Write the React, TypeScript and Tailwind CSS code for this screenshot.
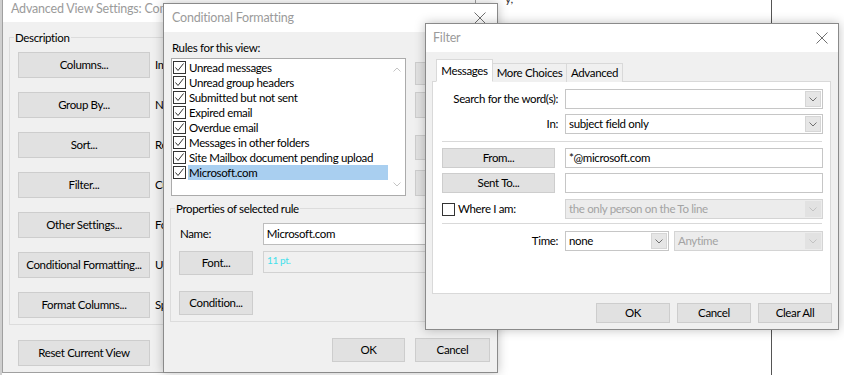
import React from 'react';

type BtnProps = { children?: React.ReactNode; className?: string };

const Btn = ({ children, className = '' }: BtnProps) => (
  <button
    type="button"
    className={`flex shrink-0 items-center justify-center whitespace-nowrap border border-[#cdcdcd] bg-[#e1e1e1] leading-none text-black ${className}`}
  >
    {children}
  </button>
);

const Chevron = ({ color = '#6d6d6d', up = false }: { color?: string; up?: boolean }) => (
  <svg width="8" height="5" viewBox="0 0 8 5" className={up ? 'rotate-180' : ''}>
    <path d="M0.5 0.5 L4 4 L7.5 0.5" fill="none" stroke={color} strokeWidth="1" />
  </svg>
);

const CloseX = () => (
  <svg width="12" height="12" viewBox="0 0 12 12">
    <path d="M0.5 0.5 L11.5 11.5 M11.5 0.5 L0.5 11.5" stroke="#707070" strokeWidth="1" fill="none" />
  </svg>
);

const Check = ({ checked = false }: { checked?: boolean }) => (
  <span className="flex h-[13px] w-[13px] shrink-0 items-center justify-center border border-[#333333] bg-white">
    {checked && (
      <svg width="11" height="11" viewBox="0 0 11 11">
        <path d="M1.5 5.5 L4 8.5 L9.5 1.5" fill="none" stroke="#333333" strokeWidth="1" />
      </svg>
    )}
  </span>
);

const Combo = ({ text = '', disabled = false, className = '' }: { text?: string; disabled?: boolean; className?: string }) => (
  <div
    className={`flex h-[20px] shrink-0 items-stretch border ${
      disabled ? 'border-[#d4d4d4] bg-[#ececec] text-[#a3a3a3]' : 'border-[#c6c6c6] bg-white text-black'
    } ${className}`}
  >
    <span className="flex flex-1 items-center truncate pl-[3px]">{text}</span>
    <span
      className={`m-px flex w-[16px] items-center justify-center ${
        disabled ? 'bg-[#e2e2e2]' : 'border border-[#d6d6d6] bg-[#e6e6e6]'
      }`}
    >
      <Chevron color={disabled ? '#c2c2c2' : '#707070'} />
    </span>
  </div>
);

const TextBox = ({ text = '', className = '' }: { text?: string; className?: string }) => (
  <div className={`flex h-[20px] shrink-0 items-center border border-[#c6c6c6] bg-white pl-[3px] ${className}`}>{text}</div>
);

// description column is cut off by the Conditional Formatting window
const descRows = [
  ['Columns...', 'Importance, Reminder, Icon'],
  ['Group By...', 'None'],
  ['Sort...', 'Received (descending)'],
  ['Filter...', 'Custom'],
  ['Other Settings...', 'Fonts and other settings'],
  ['Conditional Formatting...', 'User defined fonts'],
  ['Format Columns...', 'Specify display formats'],
];

const rules = [
  'Unread messages',
  'Unread group headers',
  'Submitted but not sent',
  'Expired email',
  'Overdue email',
  'Messages in other folders',
  'Site Mailbox document pending upload',
  'Microsoft.com',
];

function AdvancedViewSettings() {
  return (
    <div className="absolute left-[2px] top-[-4px] flex h-[377px] w-[474px] flex-col border border-[#a0a0a0] bg-[#f0f0f0]">
      <div className="flex h-[25px] shrink-0 items-center justify-between bg-white pl-[8px] pr-[10px] text-[12.5px] tracking-[-0.2px] text-[#9b9b9b]">
        <span>Advanced View Settings: Compact</span>
        <CloseX />
      </div>
      <div className="relative ml-[6px] mt-[15px] w-[440px] border border-[#dcdcdc] pb-[6px] pl-[8px] pt-[14px]">
        <span className="absolute left-[4px] top-[-8px] bg-[#f0f0f0] px-px leading-[15px]">Description</span>
        <div className="flex flex-col gap-[14px]">
          {descRows.map(([label, desc]) => (
            <div key={label} className="flex h-[26px] items-center">
              <Btn className="h-[26px] w-[132px]">{label}</Btn>
              <span className="ml-[5px] w-[8px] overflow-hidden whitespace-nowrap">{desc}</span>
            </div>
          ))}
        </div>
      </div>
      <Btn className="ml-[15px] mt-[15px] h-[26px] w-[132px]">Reset Current View</Btn>
    </div>
  );
}

function ConditionalFormatting() {
  return (
    <div className="absolute left-[163px] top-[3px] flex h-[370px] w-[335px] flex-col border border-[#8a8a8a] bg-[#f0f0f0] shadow-[0_0_10px_rgba(0,0,0,0.25)]">
      <div className="flex h-[28px] shrink-0 items-center justify-between bg-white pl-[8px] pr-[11px] text-[12.5px] tracking-[-0.2px] text-[#9b9b9b]">
        <span>Conditional Formatting</span>
        <CloseX />
      </div>
      <div className="flex flex-col pl-[7px] pt-[8px]">
        <span className="pl-px leading-[15px]">Rules for this view:</span>
        <div className="mt-[3px] flex">
          <div className="flex h-[138px] w-[235px] border border-[#ababab] bg-white">
            <div className="flex flex-1 flex-col pt-px">
              {rules.map((r, i) => (
                <div key={r} className="flex h-[15px] items-center pl-px">
                  <Check checked />
                  <span
                    className={`ml-[2px] flex h-[15px] flex-1 items-center whitespace-nowrap pl-px ${
                      i === rules.length - 1 ? 'bg-[#a9cff0]' : ''
                    }`}
                  >
                    {r}
                  </span>
                </div>
              ))}
            </div>
            <div className="flex w-[17px] flex-col items-center justify-between py-[8px]">
              <Chevron up color="#c4c4c4" />
              <Chevron color="#c4c4c4" />
            </div>
          </div>
          {/* rule buttons, mostly under the Filter window */}
          <div className="ml-[9px] flex flex-col">
            <Btn className="mt-[4px] h-[23px] w-[75px]" />
            <Btn className="mt-[7px] h-[26px] w-[75px]" />
            <Btn className="mt-[17px] h-[25px] w-[75px] bg-[#cdcdcd]" />
            <Btn className="mt-[10px] h-[26px] w-[75px] bg-[#cdcdcd]" />
          </div>
        </div>
        <div className="relative ml-[-1px] mt-[12px] w-[320px] border border-[#dcdcdc] pb-[6px] pl-[9px] pt-[14px]">
          <span className="absolute left-[4px] top-[-8px] bg-[#f0f0f0] px-px leading-[15px]">Properties of selected rule</span>
          <div className="flex h-[22px] items-center">
            <span className="w-[83px]">Name:</span>
            <div className="flex h-[22px] w-[227px] items-center border border-[#bdbdbd] bg-white pl-[3px]">Microsoft.com</div>
          </div>
          <div className="mt-[6px] flex items-start">
            <Btn className="ml-[-1px] h-[24px] w-[74px]">Font...</Btn>
            <div className="ml-[10px] h-[22px] w-[227px] border border-[#d2d2d2] bg-[#f0f0f0] pl-[3px] pt-px text-[10px] text-[#44e0ec]">
              11 pt.
            </div>
          </div>
          <Btn className="ml-[-1px] mt-[16px] h-[24px] w-[74px]">Condition...</Btn>
        </div>
        <div className="mt-[16px] flex justify-end gap-[10px] pr-[7px]">
          <Btn className="h-[24px] w-[73px]">OK</Btn>
          <Btn className="h-[24px] w-[75px]">Cancel</Btn>
        </div>
      </div>
    </div>
  );
}

function FilterDialog() {
  return (
    <div className="absolute left-[425px] top-[23px] flex h-[307px] w-[414px] flex-col border border-[#8a8a8a] bg-[#f0f0f0] shadow-[0_0_10px_rgba(0,0,0,0.25)]">
      <div className="flex h-[28px] shrink-0 items-center justify-between bg-white pl-[7px] pr-[10px] text-[12.5px] tracking-[-0.2px] text-[#9b9b9b]">
        <span>Filter</span>
        <CloseX />
      </div>
      <div className="relative z-10 -mb-px ml-[10px] mt-[7px] flex h-[23px] items-end whitespace-nowrap">
        <div className="flex h-[23px] w-[57px] items-center justify-center border border-[#d9d9d9] border-b-white bg-white">Messages</div>
        <div className="flex h-[19px] w-[74px] items-center justify-center border border-b-0 border-l-0 border-[#d9d9d9] bg-[#f0f0f0]">
          More Choices
        </div>
        <div className="flex h-[19px] w-[56px] items-center justify-center border border-b-0 border-l-0 border-[#d9d9d9] bg-[#f0f0f0]">
          Advanced
        </div>
      </div>
      <div className="ml-[6px] flex h-[213px] w-[399px] flex-col border border-[#d9d9d9] bg-white pl-[9px] pt-[7px]">
        <div className="flex h-[20px] items-center">
          <span className="w-[116px] whitespace-nowrap text-right">Search for the word(s):</span>
          <Combo className="ml-[7px] w-[258px]" />
        </div>
        <div className="mt-[5px] flex h-[20px] items-center">
          <span className="w-[116px] text-right">In:</span>
          <Combo className="ml-[7px] w-[258px]" text="subject field only" />
        </div>
        <div className="mt-[7px] h-px w-[380px] bg-[#d9d9d9]" />
        <div className="mt-[6px] flex h-[20px] items-center">
          <Btn className="h-[20px] w-[113px]">From...</Btn>
          <TextBox className="ml-[10px] w-[258px]" text="*@microsoft.com" />
        </div>
        <div className="mt-[5px] flex h-[20px] items-center">
          <Btn className="h-[20px] w-[113px]">Sent To...</Btn>
          <TextBox className="ml-[10px] w-[258px]" />
        </div>
        <div className="mt-[6px] flex h-[20px] items-center">
          <div className="flex w-[123px] items-center">
            <Check />
            <span className="ml-[3px]">Where I am:</span>
          </div>
          <Combo disabled className="w-[258px]" text="the only person on the To line" />
        </div>
        <div className="mt-[4px] h-px w-[380px] bg-[#d9d9d9]" />
        <div className="mt-[7px] flex h-[20px] items-center">
          <span className="w-[116px] text-right">Time:</span>
          <Combo className="ml-[7px] w-[104px]" text="none" />
          <Combo disabled className="ml-[5px] w-[149px]" text="Anytime" />
        </div>
      </div>
      <div className="mt-[9px] flex justify-end gap-[7px] pr-[6px]">
        <Btn className="h-[20px] w-[74px]">OK</Btn>
        <Btn className="h-[20px] w-[74px]">Cancel</Btn>
        <Btn className="h-[20px] w-[74px]">Clear All</Btn>
      </div>
    </div>
  );
}

export default function App() {
  return (
    <div className="relative h-[375px] w-[844px] overflow-hidden bg-white font-['Lato',sans-serif] text-[11.5px] tracking-[-0.35px] text-black">
      {/* desktop behind the dialogs */}
      <div className="absolute left-0 top-0 h-full w-[2px] bg-[#cfcfcf]" />
      <div className="absolute left-[771px] top-0 h-full w-px bg-[#555555]" />
      <span className="absolute left-[505px] top-[-7px] text-[12px] leading-[12px] text-[#333]">y,</span>
      <AdvancedViewSettings />
      <ConditionalFormatting />
      <FilterDialog />
    </div>
  );
}
